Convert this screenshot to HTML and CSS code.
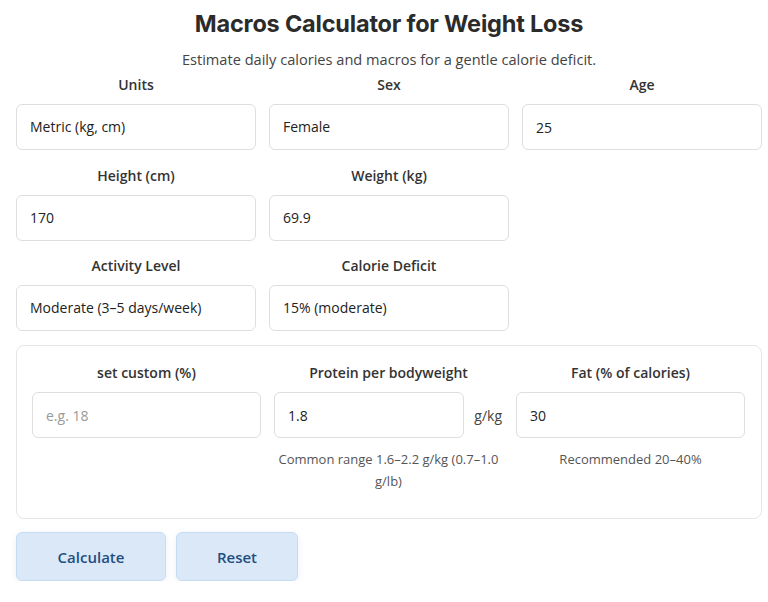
FILE: index.html
```html
<!DOCTYPE html>
<html lang="en">
<head>
  <title>Macros Calculator for Weight Loss</title>
  <link rel="stylesheet" href="styles.css">
</head>
<body>

<div id="wrapper">
  <h1>Macros Calculator for Weight Loss</h1>
  <p class="intro">Estimate daily calories and macros for a gentle calorie deficit.</p>

  <form>
    <div class="grid">
      <div class="field">
        <label>Units</label>
        <div class="box">Metric (kg, cm)</div>
      </div>
      <div class="field">
        <label>Sex</label>
        <div class="box">Female</div>
      </div>
      <div class="field">
        <label>Age</label>
        <input type="text" value="25">
      </div>

      <div class="field">
        <label>Height (cm)</label>
        <input type="text" value="170">
      </div>
      <div class="field">
        <label>Weight (kg)</label>
        <input type="text" value="69.9">
      </div>
      <div></div>

      <div class="field">
        <label>Activity Level</label>
        <div class="box">Moderate (3–5 days/week)</div>
      </div>
      <div class="field">
        <label>Calorie Deficit</label>
        <div class="box">15% (moderate)</div>
      </div>
      <div></div>
    </div>

    <div class="card">
      <div class="field">
        <label>set custom (%)</label>
        <input type="text" placeholder="e.g. 18">
      </div>
      <div class="field">
        <label>Protein per bodyweight</label>
        <div class="unit-row">
          <input type="text" value="1.8">
          <span class="unit">g/kg</span>
        </div>
        <p class="hint">Common range 1.6–2.2 g/kg (0.7–1.0 g/lb)</p>
      </div>
      <div class="field">
        <label>Fat (% of calories)</label>
        <input type="text" value="30">
        <p class="hint">Recommended 20–40%</p>
      </div>
    </div>

    <div class="buttons">
      <button type="button" class="btn calc">Calculate</button>
      <button type="button" class="btn reset">Reset</button>
    </div>
  </form>
</div>

</body>
</html>
```

FILE: styles.css
```css
* {
  box-sizing: border-box;
}

body {
  margin: 0;
  padding: 0;
  font-family: "Open Sans", "Noto Sans", sans-serif;
  font-size: 14px;
  color: #222;
  background-color: #fff;
}

#wrapper {
  width: 746px;
  margin: 0 0 0 16px;
  padding-top: 9px;
}

h1 {
  margin: 0;
  font-family: Inter, sans-serif;
  font-size: 23.5px;
  font-weight: 700;
  line-height: 30px;
  text-align: center;
  color: #2b2b2b;
  letter-spacing: -0.2px;
}

.intro {
  margin: 9px 0 0;
  font-size: 14.6px;
  line-height: 22px;
  text-align: center;
  color: #444;
}

.grid {
  display: grid;
  grid-template-columns: 240px 240px 240px;
  column-gap: 13px;
  row-gap: 13.5px;
  margin-top: 3px;
}

.field label {
  display: block;
  height: 31px;
  padding-top: 2px;
  font-weight: 600;
  text-align: center;
  color: #333;
  line-height: 20px;
}

.box,
input {
  display: block;
  width: 100%;
  height: 46px;
  padding: 0 13px;
  font-family: inherit;
  font-size: 14px;
  line-height: 44px;
  color: #222;
  background: #fff;
  border: 1px solid #dedede;
  border-radius: 6px;
}

input::placeholder {
  color: #999;
}

.card {
  display: grid;
  grid-template-columns: 229px 229px 229px;
  column-gap: 13px;
  margin-top: 14px;
  padding: 15px 15px 26px;
  border: 1px solid #e6e6e6;
  border-radius: 8px;
}

.unit-row {
  display: flex;
  align-items: center;
  gap: 10px;
}

.unit-row input {
  flex: 1;
}

.unit {
  color: #444;
  padding-right: 1px;
}

.hint {
  margin: 10px 0 0;
  font-size: 13px;
  line-height: 22px;
  color: #555;
  text-align: center;
}

.buttons {
  display: flex;
  gap: 10px;
  margin-top: 13px;
}

.btn {
  height: 49px;
  padding: 0;
  font-family: inherit;
  font-size: 15px;
  font-weight: 600;
  color: #1f4f80;
  background: #dbe8f8;
  border: 1px solid #c6dcf5;
  border-radius: 6px;
  box-shadow: 0 2px 6px rgba(120,150,200,.15);
}

.calc {
  width: 150px;
}

.reset {
  width: 122px;
}
```
